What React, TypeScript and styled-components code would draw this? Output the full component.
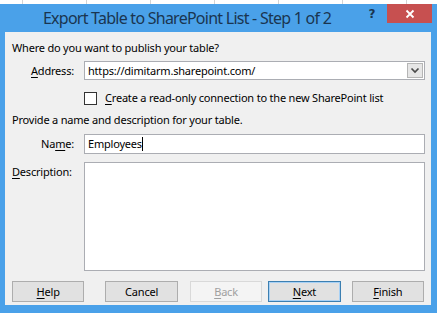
import styled, { createGlobalStyle } from "styled-components";

const GlobalStyle = createGlobalStyle`
  html, body {
    margin: 0;
    padding: 0;
    background: #ffffff;
  }
  body {
    font-family: "Noto Sans", "Open Sans", sans-serif;
  }
`;

const Screen = styled.div`
  width: 437px;
  height: 317px;
  overflow: hidden;
  display: flex;
  flex-direction: column;
  background: #ffffff;
`;

const SheetStrip = styled.div`
  height: 4px;
  flex-shrink: 0;
  background: repeating-linear-gradient(
    to right,
    #ffffff 0px,
    #ffffff 21px,
    #d4d4d4 21px,
    #d4d4d4 22px,
    #ffffff 22px,
    #ffffff 64px
  );
  background-position: 1px 0;
`;

const Frame = styled.div`
  background: #4aa1e9;
  display: flex;
  flex-direction: column;
  padding: 0 6px 8px 5px;
`;

const TitleBar = styled.div`
  height: 28px;
  display: flex;
  align-items: flex-start;
  margin-right: -1px;
`;

const Title = styled.div`
  flex: 1;
  text-align: center;
  font-size: 16px;
  line-height: 28px;
  color: #1a3550;
  padding-left: 8px;
  letter-spacing: -0.75px;
`;

const HelpGlyph = styled.div`
  width: 22px;
  margin-top: 1px;
  font-family: "DejaVu Sans", sans-serif;
  font-weight: bold;
  font-size: 12px;
  line-height: 18px;
  color: #1a3550;
  text-align: center;
`;

const CloseButton = styled.div`
  width: 45px;
  height: 19px;
  background: #c75050;
  display: flex;
  align-items: center;
  justify-content: center;
  margin-left: 4px;
`;

const Panel = styled.div`
  background: #f0f0f0;
  height: 273px;
  box-sizing: border-box;
  padding: 8px 7px 0 7px;
  display: flex;
  flex-direction: column;
  font-size: 11px;
  letter-spacing: -0.2px;
  color: #000000;
`;

const Line = styled.div<{ gap?: number }>`
  line-height: 16px;
  margin-top: ${(p) => p.gap ?? 0}px;
`;

const FieldRow = styled.div<{ gap: number; top?: boolean }>`
  display: grid;
  grid-template-columns: 62px 1fr;
  column-gap: 10px;
  align-items: ${(p) => (p.top ? "start" : "center")};
  margin-top: ${(p) => p.gap}px;
`;

const Label = styled.label<{ left?: boolean; offset?: number }>`
  text-align: ${(p) => (p.left ? "left" : "right")};
  line-height: 16px;
  margin-top: ${(p) => p.offset ?? 0}px;
`;

const Field = styled.div<{ h: number }>`
  height: ${(p) => p.h}px;
  box-sizing: border-box;
  border: 1px solid #abadb3;
  background: #ffffff;
  display: flex;
  align-items: center;
  padding-left: 3px;
  margin-right: -1px;
  line-height: 16px;
`;

const FieldText = styled.span`
  flex: 1;
`;

const Caret = styled.span`
  display: inline-block;
  width: 1px;
  height: 14px;
  background: #000000;
  vertical-align: -3px;
`;

const DropButton = styled.div`
  width: 16px;
  height: 15px;
  box-sizing: border-box;
  border: 1px solid #b5b5b5;
  background: #e6e6e6;
  margin-right: 1px;
  display: flex;
  align-items: center;
  justify-content: center;
`;

const CheckRow = styled.div`
  display: flex;
  align-items: center;
  margin-top: 10px;
  padding-left: 72px;
  line-height: 16px;
`;

const CheckBox = styled.span`
  width: 13px;
  height: 13px;
  box-sizing: border-box;
  border: 1px solid #333333;
  background: #ffffff;
  margin-right: 8px;
`;

const ButtonBar = styled.div`
  display: flex;
  margin-top: 10px;
`;

const Button = styled.div<{ primary?: boolean; disabled?: boolean; gap?: number }>`
  width: 73px;
  height: 21px;
  box-sizing: border-box;
  margin-left: ${(p) => p.gap ?? 0}px;
  border: 1px solid
    ${(p) => (p.primary ? "#3c7fb1" : p.disabled ? "#d9d9d9" : "#adadad")};
  background: ${(p) => (p.disabled ? "#f4f4f4" : "#e1e1e1")};
  color: ${(p) => (p.disabled ? "#a0a0a0" : "#000000")};
  box-shadow: ${(p) => (p.primary ? "inset 0 0 0 1px #a8d1f5" : "none")};
  display: flex;
  align-items: center;
  justify-content: center;
  line-height: 16px;
`;

const Key = styled.span`
  text-decoration: underline;
  text-underline-offset: 2px;
`;

export default function App() {
  return (
    <>
      <GlobalStyle />
      <Screen>
        <SheetStrip />
        <Frame>
          <TitleBar>
            <Title>Export Table to SharePoint List - Step 1 of 2</Title>
            <HelpGlyph>?</HelpGlyph>
            <CloseButton>
              <svg width="10" height="10" viewBox="0 0 10 10">
                <path d="M1.5 1.5 L8.5 8.5 M8.5 1.5 L1.5 8.5" stroke="#ffffff" strokeWidth="1.8" />
              </svg>
            </CloseButton>
          </TitleBar>
          <Panel>
            <Line>Where do you want to publish your table?</Line>
            <FieldRow gap={5}>
              <Label>
                <Key>A</Key>ddress:
              </Label>
              <Field h={19}>
                <FieldText>https://dimitarm.sharepoint.com/</FieldText>
                <DropButton>
                  <svg width="10" height="7" viewBox="0 0 10 7">
                    <path d="M1.5 1.5 L5 5 L8.5 1.5" fill="none" stroke="#4a4a4a" strokeWidth="1.7" />
                  </svg>
                </DropButton>
              </Field>
            </FieldRow>
            <CheckRow>
              <CheckBox />
              <span>
                <Key>C</Key>reate a read-only connection to the new SharePoint list
              </span>
            </CheckRow>
            <Line gap={6}>Provide a name and description for your table.</Line>
            <FieldRow gap={6}>
              <Label>
                Na<Key>m</Key>e:
              </Label>
              <Field h={20}>
                <FieldText>
                  Employees
                  <Caret />
                </FieldText>
              </Field>
            </FieldRow>
            <FieldRow gap={8} top>
              <Label left offset={2}>
                <Key>D</Key>escription:
              </Label>
              <Field h={109} />
            </FieldRow>
            <ButtonBar>
              <Button>
                <Key>H</Key>elp
              </Button>
              <Button gap={21}>Cancel</Button>
              <Button gap={12} disabled>
                <Key>B</Key>ack
              </Button>
              <Button gap={6} primary>
                <Key>N</Key>ext
              </Button>
              <Button gap={11}>
                <Key>F</Key>inish
              </Button>
            </ButtonBar>
          </Panel>
        </Frame>
      </Screen>
    </>
  );
}
